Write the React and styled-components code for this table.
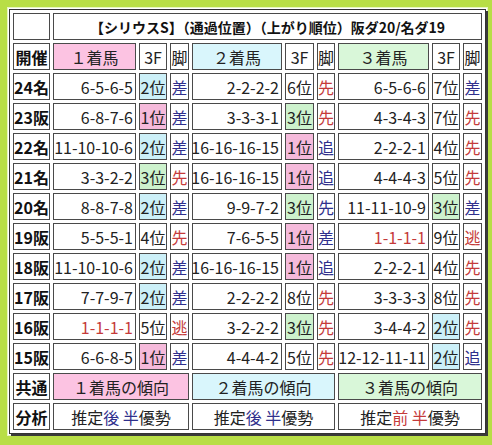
import React from "react"
import styled, { createGlobalStyle } from "styled-components"

const GlobalStyle = createGlobalStyle`
  html, body {
    margin: 0;
    padding: 0;
    background: #b8de46;
  }
  body {
    font-family: "Noto Sans CJK JP", "Noto Sans", sans-serif;
    color: #222;
  }
`

const RED = "#c53a3a"
const NAVY = "#2f2f8c"

const rankBg = {
  1: "#f5badb",
  2: "#ccf0f8",
  3: "#cdf2cd",
}

const headBg = {
  pink: "#fcc3e2",
  blue: "#d9f6fc",
  green: "#d9f7d9",
}

const Page = styled.div`
  padding: 7px 5px 8px 7px;
  background: #b8de46;
  min-height: 445px;
  box-sizing: border-box;
`

const Frame = styled.div`
  display: inline-block;
  background: #fff;
  border: 1px solid #e6f4bd;
  padding: 1px;
`

const Grid = styled.div`
  display: grid;
  grid-template-columns: 37px 83px 28px 19px 90px 29px 18px 91px 28px 19px;
  grid-auto-rows: 27px;
  gap: 3px;
  padding: 3px;
  border: 1px solid #333;
  box-shadow: 2px 2px 0 #3a3a3a;
  background: #fff;
`

const Cell = styled.div`
  box-sizing: border-box;
  grid-column: span ${({ $span }) => $span || 1};
  display: flex;
  align-items: center;
  justify-content: ${({ $align }) => ($align === "right" ? "flex-end" : "center")};
  padding-right: ${({ $align }) => ($align === "right" ? "2px" : "0")};
  border: 1px solid #4a4a4a;
  background: ${({ $bg }) => $bg || "#fff"};
  font-size: 16px;
  line-height: 24px;
  white-space: nowrap;
  color: ${({ $color }) => $color || "#222"};
`

const Label = styled(Cell)`
  font-weight: bold;
  color: #111;
`

const Title = styled(Cell)`
  font-weight: bold;
  font-size: 14px;
  color: #111;
`

const Mark = styled.span`
  color: ${({ $c }) => $c};
`

const rows = [
  ["24名", ["6-5-6-5", 2, "差"], ["2-2-2-2", 6, "先"], ["6-5-6-6", 7, "差"]],
  ["23阪", ["6-8-7-6", 1, "差"], ["3-3-3-1", 3, "先"], ["4-3-4-3", 7, "先"]],
  ["22名", ["11-10-10-6", 2, "差"], ["16-16-16-15", 1, "追"], ["2-2-2-1", 4, "先"]],
  ["21名", ["3-3-2-2", 3, "先"], ["16-16-16-15", 1, "追"], ["4-4-4-3", 5, "先"]],
  ["20名", ["8-8-7-8", 2, "差"], ["9-9-7-2", 3, "先", NAVY], ["11-11-10-9", 3, "差"]],
  ["19阪", ["5-5-5-1", 4, "先"], ["7-6-5-5", 1, "差"], ["1-1-1-1", 9, "逃"]],
  ["18阪", ["11-10-10-6", 2, "差"], ["16-16-16-15", 1, "追"], ["2-2-2-1", 4, "先"]],
  ["17阪", ["7-7-9-7", 2, "差"], ["2-2-2-2", 8, "先"], ["3-3-3-3", 8, "先"]],
  ["16阪", ["1-1-1-1", 5, "逃"], ["3-2-2-2", 3, "先"], ["3-4-4-2", 2, "先"]],
  ["15阪", ["6-6-8-5", 1, "差"], ["4-4-4-2", 5, "先"], ["12-12-11-11", 2, "追"]],
]

const styleColor = (s) => (s === "差" || s === "追" ? NAVY : RED)

function Horse({ data }) {
  const [pos, rank, style, forced] = data
  return (
    <>
      <Cell $align="right" $color={pos === "1-1-1-1" ? RED : undefined}>{pos}</Cell>
      <Cell $bg={rankBg[rank]}>{rank}位</Cell>
      <Cell $color={forced || styleColor(style)}>{style}</Cell>
    </>
  )
}

export default function App() {
  return (
    <>
      <GlobalStyle />
      <Page>
        <Frame>
          <Grid>
            <Cell />
            <Title $span={9}>【シリウスS】（通過位置）（上がり順位）阪ダ20/名ダ19</Title>

            <Label>開催</Label>
            <Cell $bg={headBg.pink}>１着馬</Cell>
            <Cell>3F</Cell>
            <Cell>脚</Cell>
            <Cell $bg={headBg.blue}>２着馬</Cell>
            <Cell>3F</Cell>
            <Cell>脚</Cell>
            <Cell $bg={headBg.green}>３着馬</Cell>
            <Cell>3F</Cell>
            <Cell>脚</Cell>

            {rows.map(([race, a, b, c]) => (
              <React.Fragment key={race}>
                <Label>{race}</Label>
                <Horse data={a} />
                <Horse data={b} />
                <Horse data={c} />
              </React.Fragment>
            ))}

            <Label>共通</Label>
            <Cell $span={3} $bg={headBg.pink}>１着馬の傾向</Cell>
            <Cell $span={3} $bg={headBg.blue}>２着馬の傾向</Cell>
            <Cell $span={3} $bg={headBg.green}>３着馬の傾向</Cell>

            <Label>分析</Label>
            <Cell $span={3}>推定<Mark $c={NAVY}>後 半</Mark>優勢</Cell>
            <Cell $span={3}>推定<Mark $c={NAVY}>後 半</Mark>優勢</Cell>
            <Cell $span={3}>推定<Mark $c={RED}>前 半</Mark>優勢</Cell>
          </Grid>
        </Frame>
      </Page>
    </>
  )
}
